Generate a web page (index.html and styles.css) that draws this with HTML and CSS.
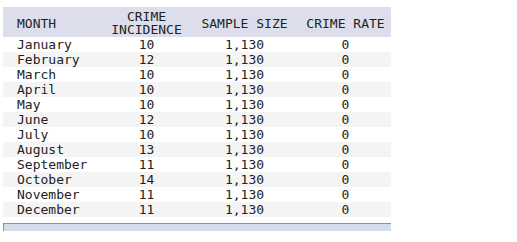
FILE: index.html
```html
<!DOCTYPE html>
<html lang="en">
<head>
    <meta charset="UTF-8" />
    <title>Crime Rate</title>
    <link rel="stylesheet" href="styles.css">
</head>
<body>
    <main class="page">
        <table class="stats">
            <colgroup>
                <col class="col-month">
                <col class="col-incidence">
                <col class="col-sample">
                <col class="col-rate">
            </colgroup>
            <thead>
                <tr>
                    <th class="left">MONTH</th>
                    <th>CRIME<br>INCIDENCE</th>
                    <th>SAMPLE SIZE</th>
                    <th>CRIME RATE</th>
                </tr>
            </thead>
            <tbody>
                <tr><td class="left">January</td><td>10</td><td>1,130</td><td>0</td></tr>
                <tr><td class="left">February</td><td>12</td><td>1,130</td><td>0</td></tr>
                <tr><td class="left">March</td><td>10</td><td>1,130</td><td>0</td></tr>
                <tr><td class="left">April</td><td>10</td><td>1,130</td><td>0</td></tr>
                <tr><td class="left">May</td><td>10</td><td>1,130</td><td>0</td></tr>
                <tr><td class="left">June</td><td>12</td><td>1,130</td><td>0</td></tr>
                <tr><td class="left">July</td><td>10</td><td>1,130</td><td>0</td></tr>
                <tr><td class="left">August</td><td>13</td><td>1,130</td><td>0</td></tr>
                <tr><td class="left">September</td><td>11</td><td>1,130</td><td>0</td></tr>
                <tr><td class="left">October</td><td>14</td><td>1,130</td><td>0</td></tr>
                <tr><td class="left">November</td><td>11</td><td>1,130</td><td>0</td></tr>
                <tr><td class="left">December</td><td>11</td><td>1,130</td><td>0</td></tr>
            </tbody>
        </table>
        <div class="scrollbar"></div>
    </main>
</body>
</html>
```

FILE: styles.css
```css
/* 基本样式 */
*, ::before, ::after { box-sizing: border-box; }
body { margin: 0; background: #ffffff; color: #222222; font-family: 'DejaVu Sans Mono', monospace; font-size: 13px; }
.page { padding: 7px 3px; display: flex; flex-direction: column; gap: 6px; width: 394px; }
/* 表格 */
.stats { width: 388px; border-collapse: collapse; border-spacing: 0; table-layout: fixed; }
.col-month { width: 101px; }
.col-incidence { width: 85px; }
.col-sample { width: 111px; }
.col-rate { width: 91px; }
.stats th { height: 30px; padding: 2px 0 0; background: #dcdfeb; font-weight: normal; line-height: 13px; text-align: center; vertical-align: middle; }
.stats td { height: 15px; padding: 0; line-height: 15px; text-align: center; white-space: nowrap; }
.stats .left { text-align: left; padding-left: 14px; }
.stats tbody tr:nth-child(even) td { background: #f4f4f4; }
/* 底部滚动条 */
.scrollbar { width: 388px; height: 8px; background: #d4dbe9; border-top: 1px solid #8c9099; border-left: 1px solid #8c9099; }
```
